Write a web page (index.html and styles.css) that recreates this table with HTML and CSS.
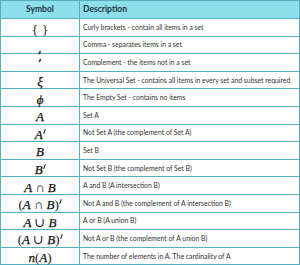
FILE: index.html
```html
<!DOCTYPE html>
<html>
<head>
<meta charset="utf-8">
<link rel="stylesheet" href="styles.css">
</head>
<body>
<table class="sets">
  <thead>
    <tr><th class="sym">Symbol</th><th class="desc">Description</th></tr>
  </thead>
  <tbody>
    <tr><td class="sym"><span class="up">{ }</span></td><td class="desc">Curly brackets - contain all items in a set</td></tr>
    <tr><td class="sym"><span class="up comma">,</span></td><td class="desc">Comma - separates items in a set</td></tr>
    <tr><td class="sym"><span class="up prime">’</span></td><td class="desc">Complement - the items not in a set</td></tr>
    <tr><td class="sym"><span class="m">ξ</span></td><td class="desc">The Universal Set - contains all items in every set and subset required</td></tr>
    <tr><td class="sym"><span class="m">ϕ</span></td><td class="desc">The Empty Set - contains no items</td></tr>
    <tr><td class="sym"><span class="m">A</span></td><td class="desc">Set A</td></tr>
    <tr><td class="sym"><span class="m">A<span class="pr"></span></span></td><td class="desc">Not Set A (the complement of Set A)</td></tr>
    <tr><td class="sym"><span class="m">B</span></td><td class="desc">Set B</td></tr>
    <tr><td class="sym"><span class="m">B<span class="pr"></span></span></td><td class="desc">Not Set B (the complement of Set B)</td></tr>
    <tr><td class="sym"><span class="m">A <span class="op">∩</span> B</span></td><td class="desc">A and B (A intersection B)</td></tr>
    <tr><td class="sym"><span class="m"><span class="op">(</span>A <span class="op">∩</span> B<span class="op">)</span><span class="pr"></span></span></td><td class="desc">Not A and B (the complement of A intersection B)</td></tr>
    <tr><td class="sym"><span class="m">A <span class="op">∪</span> B</span></td><td class="desc">A or B (A union B)</td></tr>
    <tr><td class="sym"><span class="m"><span class="op">(</span>A <span class="op">∪</span> B<span class="op">)</span><span class="pr"></span></span></td><td class="desc">Not A or B (the complement of A union B)</td></tr>
    <tr><td class="sym"><span class="m">n<span class="op">(</span>A<span class="op">)</span></span></td><td class="desc">The number of elements in A. The cardinality of A</td></tr>
  </tbody>
</table>
</body>
</html>
```
FILE: styles.css
```css
html, body {
  margin: 0;
  padding: 0;
  background: #ffffff;
}
.sets {
  width: 300px;
  border-collapse: collapse;
  table-layout: fixed;
  font-family: Lato, "Liberation Sans", sans-serif;
}
.sets th, .sets td {
  border: 1px solid #56adbb;
  padding: 0;
}
.sets th {
  background: #8ddfec;
  height: 17px;
  font-size: 8.5px;
  font-weight: 700;
  color: #1d3340;
  line-height: 1;
}
.sets td {
  height: 16.6px;
  line-height: 1;
}
.sym {
  width: 78px;
  text-align: center;
}
th.desc, td.desc {
  text-align: left;
  padding-left: 3px;
}
td.desc {
  font-size: 6.85px;
  color: #333333;
  white-space: nowrap;
}
.m {
  font-family: "Liberation Serif", "DejaVu Serif", serif;
  font-style: italic;
  font-size: 13px;
  color: #111;
  -webkit-text-stroke: 0.25px #111;
}
.m .op {
  font-style: normal;
  -webkit-text-stroke: 0;
}
.m .pr {
  display: inline-block;
  width: 1.3px;
  height: 5px;
  background: #111;
  border-radius: 1px;
  transform: skewX(-18deg);
  vertical-align: 5px;
  margin-left: 1.5px;
}
.up {
  font-family: "DejaVu Serif", "Liberation Serif", serif;
  font-size: 11px;
  color: #111;
}
.comma {
  font-weight: 700;
  position: relative;
  top: 2px;
}
.prime {
  font-weight: 700;
  position: relative;
  top: -1px;
}
```
